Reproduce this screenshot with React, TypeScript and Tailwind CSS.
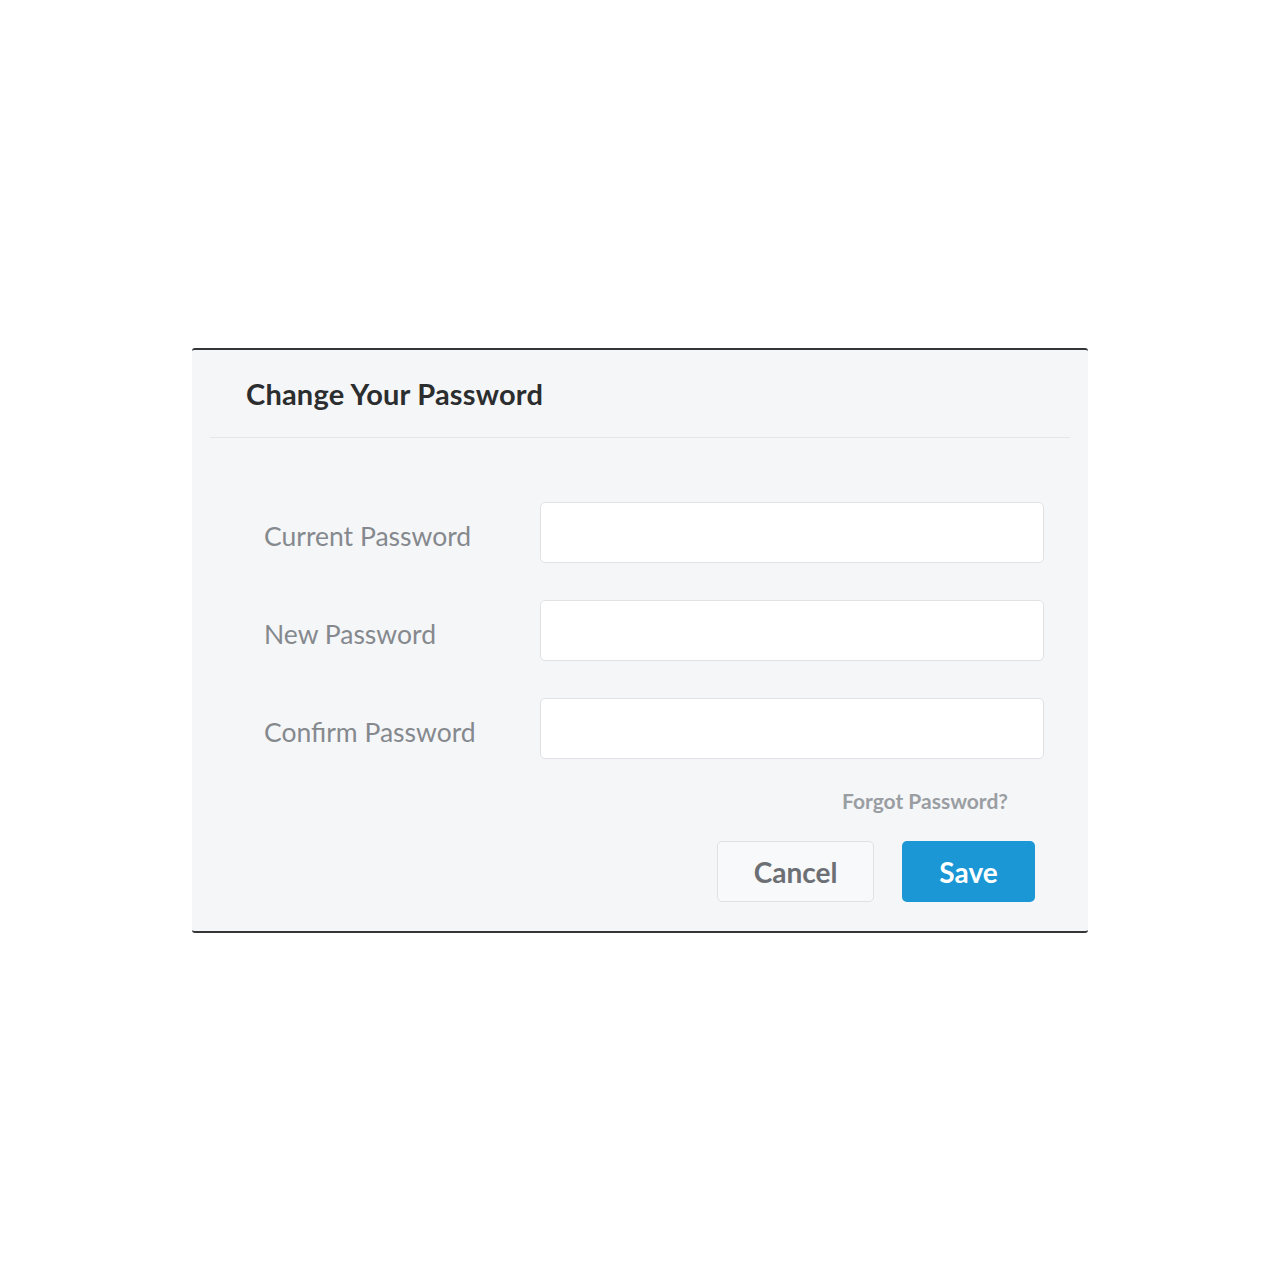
import React from "react"

const fields = ["Current Password", "New Password", "Confirm Password"]

export default function App() {
  return (
    <div className="min-h-[1280px] w-full bg-white pt-[348px] font-['Lato',sans-serif]">
      <div className="mx-auto w-[896px] h-[585px] flex flex-col bg-[#f5f6f8] border-y-2 border-[#333638] rounded-[3px]">
        <div className="h-[87px] flex items-center px-[54px]">
          <h2 className="text-[29px] font-bold text-[#2b2d2f] tracking-[0.2px]">Change Your Password</h2>
        </div>
        <div className="mx-[18px] h-px bg-[#e4e6e9]" />

        <div className="flex flex-col gap-[37px] pt-[64px] pl-[72px]">
          {fields.map((label) => (
            <div key={label} className="flex items-center">
              <label className="w-[276px] pt-[8px] text-[26.5px] text-[#85898e]">{label}</label>
              <input
                type="password"
                className="w-[504px] h-[61px] bg-white border border-[#e0e2e5] rounded-[5px] outline-none px-4"
              />
            </div>
          ))}
        </div>

        <div className="flex justify-end pr-[80px] mt-[30px]">
          <a className="text-[21px] leading-[24px] font-bold text-[#9a9ea3] cursor-pointer">Forgot Password?</a>
        </div>

        <div className="flex justify-end gap-[28px] pr-[53px] mt-[28px]">
          <button className="w-[157px] h-[61px] rounded-[5px] border border-[#dfe1e4] bg-[#f8f9fa] text-[28px] font-bold text-[#6c7075]">
            Cancel
          </button>
          <button className="w-[133px] h-[61px] rounded-[5px] bg-[#1a97d4] text-[28px] font-bold text-white">
            Save
          </button>
        </div>
      </div>
    </div>
  )
}
